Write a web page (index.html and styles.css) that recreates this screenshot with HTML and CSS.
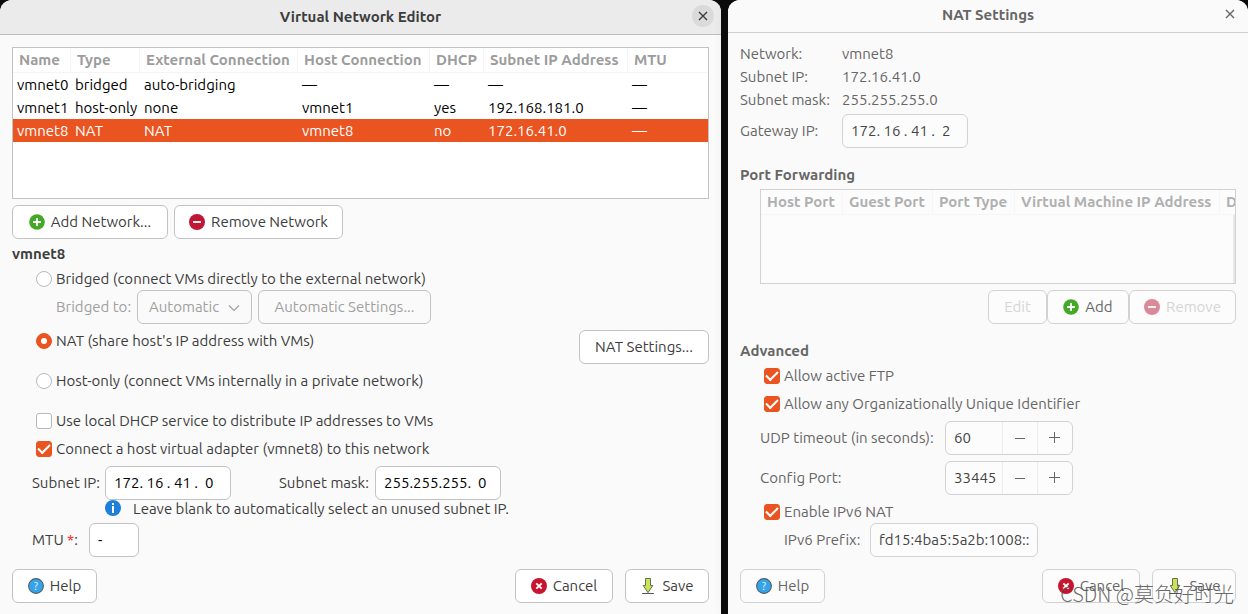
FILE: index.html
```html
<!DOCTYPE html>
<html lang="en">
<head>
    <meta charset="UTF-8">
    <meta name="viewport" content="width=device-width, initial-scale=1.0">
    <title>Virtual Network Editor</title>
    <link rel="stylesheet" href="styles.css">
</head>
<body>
    <!-- shared icons -->
    <svg class="sprite" aria-hidden="true">
        <symbol id="icon-close" viewBox="0 0 16 16">
            <path d="M4 4l8 8M12 4l-8 8" fill="none" stroke="currentColor" stroke-width="1.4"/>
        </symbol>
        <symbol id="icon-add" viewBox="0 0 16 16">
            <circle cx="8" cy="8" r="7.8" fill="#43a927"/>
            <path d="M8 4v8M4 8h8" stroke="#fff" stroke-width="1.8"/>
        </symbol>
        <symbol id="icon-remove" viewBox="0 0 16 16">
            <circle cx="8" cy="8" r="8" fill="#bf1736"/>
            <path d="M4 8h8" stroke="#fff" stroke-width="1.8"/>
        </symbol>
        <symbol id="icon-cancel" viewBox="0 0 16 16">
            <circle cx="8" cy="8" r="8" fill="#c8152f"/>
            <path d="M5.3 5.3l5.4 5.4M10.7 5.3l-5.4 5.4" stroke="#fff" stroke-width="1.9"/>
        </symbol>
        <symbol id="icon-help" viewBox="0 0 16 16">
            <circle cx="8" cy="8" r="7.4" fill="#35a3e8" stroke="#53606a" stroke-width="1.1"/>
            <text x="8" y="12" font-size="11" text-anchor="middle" fill="#e6f4fd">?</text>
        </symbol>
        <symbol id="icon-save" viewBox="0 0 16 16">
            <path d="M5.5 .5h5v7h2.3L8 14.6 3.2 7.5h2.3z" fill="#c9e45c" stroke="#66704a"/>
            <path d="M2 15.5h12" stroke="#555"/>
        </symbol>
        <symbol id="icon-info" viewBox="0 0 16 16">
            <circle cx="8" cy="8" r="8" fill="#1c7fd9"/>
            <rect x="7" y="6" width="2" height="7" fill="#fff"/>
            <rect x="7" y="3" width="2" height="2" fill="#fff"/>
        </symbol>
        <symbol id="icon-minus" viewBox="0 0 16 16">
            <path d="M3 8.5h10" stroke="currentColor"/>
        </symbol>
        <symbol id="icon-plus" viewBox="0 0 16 16">
            <path d="M2 7.5h11M7.5 2v11" stroke="currentColor"/>
        </symbol>
    </svg>

    <main class="desktop">
        <!-- Virtual Network Editor -->
        <section class="window">
            <header class="titlebar">
                <h1>Virtual Network Editor</h1>
                <button class="close" aria-label="Close"><svg class="icon"><use href="#icon-close"/></svg></button>
            </header>

            <form class="content">
                <div class="list networks">
                    <table>
                        <colgroup>
                            <col class="col-name"><col class="col-type"><col class="col-external"><col class="col-host">
                            <col class="col-dhcp"><col class="col-subnet"><col>
                        </colgroup>
                        <thead>
                            <tr><th>Name</th><th>Type</th><th>External Connection</th><th>Host Connection</th><th>DHCP</th><th>Subnet IP Address</th><th>MTU</th></tr>
                        </thead>
                        <tbody>
                            <tr><td>vmnet0</td><td>bridged</td><td>auto-bridging</td><td>—</td><td>—</td><td>—</td><td>—</td></tr>
                            <tr><td>vmnet1</td><td>host-only</td><td>none</td><td>vmnet1</td><td>yes</td><td>192.168.181.0</td><td>—</td></tr>
                            <tr class="selected"><td>vmnet8</td><td>NAT</td><td>NAT</td><td>vmnet8</td><td>no</td><td>172.16.41.0</td><td>—</td></tr>
                        </tbody>
                    </table>
                </div>

                <div class="row list-actions">
                    <button type="button" class="btn btn-add-network"><svg class="icon"><use href="#icon-add"/></svg>Add Network...</button>
                    <button type="button" class="btn btn-remove-network"><svg class="icon"><use href="#icon-remove"/></svg>Remove Network</button>
                </div>

                <h2 class="network-name">vmnet8</h2>

                <label class="option"><input type="radio" name="mode">Bridged (connect VMs directly to the external network)</label>
                <div class="row bridge-row">
                    <label class="bridge-label" for="bridge">Bridged to:</label>
                    <span class="select">
                        <select id="bridge" class="btn" disabled><option>Automatic</option></select>
                        <svg class="chevron" viewBox="0 0 12 8"><path d="M1 1.5l5 5 5-5" fill="none" stroke="currentColor" stroke-width="1.2"/></svg>
                    </span>
                    <button type="button" class="btn btn-auto" disabled>Automatic Settings...</button>
                </div>

                <div class="nat-row">
                    <label class="option"><input type="radio" name="mode" checked>NAT (share host's IP address with VMs)</label>
                    <button type="button" class="btn btn-nat">NAT Settings...</button>
                </div>
                <label class="option"><input type="radio" name="mode">Host-only (connect VMs internally in a private network)</label>

                <label class="option dhcp"><input type="checkbox">Use local DHCP service to distribute IP addresses to VMs</label>
                <label class="option adapter"><input type="checkbox" checked>Connect a host virtual adapter (vmnet8) to this network</label>

                <div class="subnet">
                    <label for="subnet-ip">Subnet IP:</label>
                    <input class="entry ip" id="subnet-ip" type="text" value="172. 16 . 41 .  0">
                    <label class="mask-label" for="subnet-mask">Subnet mask:</label>
                    <input class="entry ip" id="subnet-mask" type="text" value="255.255.255.  0">
                    <p class="hint"><svg class="icon"><use href="#icon-info"/></svg>Leave blank to automatically select an unused subnet IP.</p>
                </div>

                <div class="mtu">
                    <label for="mtu">MTU <span class="required">*</span>:</label>
                    <input class="entry" id="mtu" type="text" value="-">
                </div>

                <footer class="actions">
                    <button type="button" class="btn btn-help"><svg class="icon"><use href="#icon-help"/></svg>Help</button>
                    <button type="button" class="btn btn-cancel"><svg class="icon"><use href="#icon-cancel"/></svg>Cancel</button>
                    <button type="button" class="btn btn-save"><svg class="icon"><use href="#icon-save"/></svg>Save</button>
                </footer>
            </form>
        </section>

        <!-- NAT Settings -->
        <section class="window inactive">
            <header class="titlebar">
                <h1>NAT Settings</h1>
                <button class="close" aria-label="Close"><svg class="icon"><use href="#icon-close"/></svg></button>
            </header>

            <form class="content">
                <dl class="details">
                    <dt>Network:</dt><dd>vmnet8</dd>
                    <dt>Subnet IP:</dt><dd>172.16.41.0</dd>
                    <dt>Subnet mask:</dt><dd>255.255.255.0</dd>
                </dl>
                <div class="gateway">
                    <label for="gateway">Gateway IP:</label>
                    <input class="entry ip" id="gateway" type="text" value="172. 16 . 41 .  2">
                </div>

                <h2 class="ports-title">Port Forwarding</h2>
                <div class="list ports">
                    <table>
                        <colgroup>
                            <col class="col-host-port"><col class="col-guest-port"><col class="col-port-type"><col class="col-address"><col>
                        </colgroup>
                        <thead>
                            <tr><th>Host Port</th><th>Guest Port</th><th>Port Type</th><th>Virtual Machine IP Address</th><th>Description</th></tr>
                        </thead>
                    </table>
                    <div class="ports-body"></div>
                </div>
                <div class="port-actions">
                    <button type="button" class="btn btn-edit" disabled>Edit</button>
                    <button type="button" class="btn btn-add"><svg class="icon"><use href="#icon-add"/></svg>Add</button>
                    <button type="button" class="btn btn-remove" disabled><svg class="icon"><use href="#icon-remove"/></svg>Remove</button>
                </div>

                <h2 class="advanced-title">Advanced</h2>
                <label class="option"><input type="checkbox" checked>Allow active FTP</label>
                <label class="option adapter"><input type="checkbox" checked>Allow any Organizationally Unique Identifier</label>

                <div class="setting">
                    <label for="udp">UDP timeout (in seconds):</label>
                    <div class="spin">
                        <input id="udp" type="text" value="60">
                        <button type="button" aria-label="Decrease"><svg class="icon"><use href="#icon-minus"/></svg></button>
                        <button type="button" aria-label="Increase"><svg class="icon"><use href="#icon-plus"/></svg></button>
                    </div>
                </div>
                <div class="setting">
                    <label for="port">Config Port:</label>
                    <div class="spin">
                        <input id="port" type="text" value="33445">
                        <button type="button" aria-label="Decrease"><svg class="icon"><use href="#icon-minus"/></svg></button>
                        <button type="button" aria-label="Increase"><svg class="icon"><use href="#icon-plus"/></svg></button>
                    </div>
                </div>

                <label class="option adapter"><input type="checkbox" checked>Enable IPv6 NAT</label>
                <div class="prefix">
                    <label for="prefix">IPv6 Prefix:</label>
                    <input class="entry" id="prefix" type="text" value="fd15:4ba5:5a2b:1008::/64">
                </div>

                <footer class="actions">
                    <button type="button" class="btn btn-help"><svg class="icon"><use href="#icon-help"/></svg>Help</button>
                    <button type="button" class="btn btn-cancel"><svg class="icon"><use href="#icon-cancel"/></svg>Cancel</button>
                    <button type="button" class="btn btn-save"><svg class="icon"><use href="#icon-save"/></svg>Save</button>
                </footer>
            </form>
        </section>
    </main>

    <div class="watermark">CSDN @莫负好时光</div>
</body>
</html>
```

FILE: styles.css
```css
* {
    margin: 0;
    padding: 0;
    box-sizing: border-box;
}

body {
    position: relative;
    background: #0c0c0c;
    color: #3d3d3d;
    font-family: Ubuntu, "Noto Sans", sans-serif;
    font-size: 15px;
    font-variant-ligatures: none;
    line-height: 22px;
}

button,
input,
select {
    font: inherit;
    color: inherit;
}

.sprite {
    display: none;
}

.icon {
    width: 16px;
    height: 16px;
    flex: none;
}

.desktop {
    display: grid;
    grid-template-columns: minmax(0, 1fr) 520px;
    gap: 7px;
    min-height: 100vh;
}

/* windows */
.window {
    display: flex;
    flex-direction: column;
    background: #fafafa;
    border-radius: 12px 12px 0 0;
}

.titlebar {
    display: grid;
    grid-template-columns: 1fr auto 1fr;
    align-items: center;
    height: 35px;
    padding: 0 7px;
    background: #ebebeb;
    border-bottom: 1px solid #bfbfbf;
    border-radius: 12px 12px 0 0;
}

.titlebar h1 {
    grid-column: 2;
    font-size: 15px;
}

.close {
    display: flex;
    align-items: center;
    justify-content: center;
    justify-self: end;
    width: 22px;
    height: 22px;
    margin-bottom: 2px;
    border: 0;
    border-radius: 50%;
    background: #dadada;
}

.content {
    flex: 1;
    padding: 12px 12px 11px;
}

h2 {
    font-size: 15px;
}

/* lists */
.list {
    overflow: hidden;
    background: #fff;
    border: 1px solid #c3c3c3;
}

.networks {
    height: 152px;
}

table {
    width: 100%;
    table-layout: fixed;
    border-collapse: separate;
    border-spacing: 0;
    color: #000;
}

th {
    height: 25px;
    padding: 0 0 0 6px;
    border-right: 1px solid #f5f5f5;
    border-bottom: 1px solid #f5f5f5;
    color: #9c9c9c;
    text-align: left;
    white-space: nowrap;
}

th:last-child {
    border-right: 0;
}

td {
    height: 23px;
    padding: 0 0 0 4px;
    white-space: nowrap;
}

.selected {
    background: #e95420;
    color: #fff;
}

.col-name { width: 58px; }
.col-type { width: 69px; }
.col-external { width: 158px; }
.col-host { width: 132px; }
.col-dhcp { width: 54px; }
.col-subnet { width: 144px; }

/* buttons and entries */
.btn {
    display: flex;
    align-items: center;
    justify-content: center;
    gap: 6px;
    height: 34px;
    border: 1px solid #c3c3c3;
    border-radius: 6px;
    background: #fff;
    white-space: nowrap;
}

.btn:disabled {
    background: #fafafa;
    color: #a0a0a0;
    opacity: 1;
}

.btn-add-network { width: 156px; }
.btn-remove-network { width: 169px; }
.btn-auto { width: 173px; }
.btn-nat { width: 130px; }
.btn-help { width: 85px; }
.btn-cancel { width: 98px; }
.btn-save { width: 84px; }

.entry {
    height: 34px;
    padding: 0 8px 2px;
    border: 1px solid #c3c3c3;
    border-radius: 6px;
    background: #fff;
    color: #000;
}

.ip {
    width: 126px;
}

.row {
    display: flex;
    align-items: center;
    gap: 6px;
}

.list-actions {
    margin-top: 6px;
}

.network-name {
    line-height: 29px;
}

/* radios and check boxes */
.option {
    display: flex;
    align-items: center;
    gap: 4px;
    height: 22px;
    padding-left: 24px;
}

.option input {
    appearance: none;
    display: flex;
    align-items: center;
    justify-content: center;
    width: 16px;
    height: 16px;
    border: 1px solid #b8b8b8;
    border-radius: 3px;
    background: #fff;
}

.option input[type="radio"] {
    border-radius: 50%;
}

.option input:checked {
    border-color: #e95420;
    background: #e95420;
}

.option input[type="radio"]:checked::before {
    content: "";
    width: 6px;
    height: 6px;
    border-radius: 50%;
    background: #fff;
}

.option input[type="checkbox"]:checked::before {
    content: "";
    width: 10px;
    height: 5px;
    margin-bottom: 4px;
    border: solid #fff;
    border-width: 0 0 2px 2px;
    transform: rotate(-45deg);
}

.bridge-label {
    width: 75px;
    margin-left: 44px;
    color: #a0a0a0;
    white-space: nowrap;
}

.select {
    position: relative;
    color: #a0a0a0;
}

.select select {
    appearance: none;
    width: 115px;
    padding: 0 11px;
}

.chevron {
    position: absolute;
    top: 14px;
    right: 12px;
    width: 12px;
    height: 8px;
}

.nat-row {
    display: flex;
    align-items: flex-start;
    justify-content: space-between;
    margin: 6px 0;
}

.dhcp {
    margin-top: 18px;
}

.adapter {
    margin-top: 6px;
}

.subnet {
    display: grid;
    grid-template-columns: 73px 126px 144px 126px;
    align-items: center;
    margin: 6px 0 5px 20px;
}

.mask-label {
    padding-left: 48px;
    white-space: nowrap;
}

.hint {
    display: flex;
    grid-column: 2 / -1;
    gap: 12px;
    line-height: 18px;
    white-space: nowrap;
}

.mtu {
    display: grid;
    grid-template-columns: 57px 50px;
    align-items: center;
    margin-left: 20px;
}

.required {
    color: #f02020;
}

.actions {
    display: flex;
    gap: 12px;
    margin-top: 12px;
}

.actions .btn-help {
    margin-right: auto;
}

/* NAT settings, drawn as a window without focus */
.inactive {
    box-shadow: 0 0 16px rgba(0, 0, 0, 0.12);
    color: #666;
}

.inactive .titlebar {
    height: 33px;
    padding-bottom: 2px;
    background: #fafafa;
    border-color: #d0d0d0;
}

.inactive .close {
    background: none;
}

.inactive .content {
    padding-top: 9px;
}

.inactive .btn,
.inactive .entry,
.inactive .list {
    border-color: #d2d2d2;
    background: #fcfcfc;
}

.inactive .btn:disabled {
    color: #d5d5d5;
}

.inactive .btn:disabled .icon {
    opacity: 0.5;
}

.inactive .entry {
    color: #444;
}

.inactive th {
    border-color: #f6f6f6;
    color: #b0b0b0;
}

.details,
.gateway {
    display: grid;
    grid-template-columns: 102px 1fr;
    align-items: center;
}

.details {
    line-height: 23px;
}

.gateway {
    margin-top: 3px;
}

.ports-title {
    margin-top: 13px;
    line-height: 28px;
}

.ports {
    display: flex;
    flex-direction: column;
    height: 95px;
    margin-left: 20px;
}

.ports-body {
    flex: 1;
    border-right: 2px solid #e8e8e8;
}

.col-host-port { width: 82px; }
.col-guest-port { width: 90px; }
.col-port-type { width: 82px; }
.col-address { width: 205px; }

.port-actions {
    display: flex;
    justify-content: flex-end;
    margin-top: 6px;
}

.btn-edit { width: 59px; }
.btn-add { width: 82px; }
.btn-remove { width: 107px; }

.advanced-title {
    margin: 16px 0 3px;
}

.setting {
    display: grid;
    grid-template-columns: 185px 128px;
    align-items: center;
    margin: 6px 0 0 20px;
}

.spin {
    display: grid;
    grid-template-columns: 1fr 35px 35px;
    height: 34px;
    border: 1px solid #d2d2d2;
    border-radius: 6px;
    background: #fcfcfc;
}

.spin input {
    min-width: 0;
    padding-left: 8px;
    border: 0;
    background: none;
    color: #444;
}

.spin button {
    display: flex;
    align-items: center;
    justify-content: center;
    border: 0;
    border-left: 1px solid #ebebeb;
    background: none;
}

.prefix {
    display: grid;
    grid-template-columns: 86px 168px;
    align-items: center;
    margin-left: 44px;
}

.watermark {
    position: absolute;
    right: 14px;
    bottom: 5px;
    color: rgba(80, 80, 80, 0.85);
    font-family: "Noto Sans CJK SC", sans-serif;
    font-size: 20px;
    font-weight: 300;
    line-height: 30px;
    pointer-events: none;
}
```
